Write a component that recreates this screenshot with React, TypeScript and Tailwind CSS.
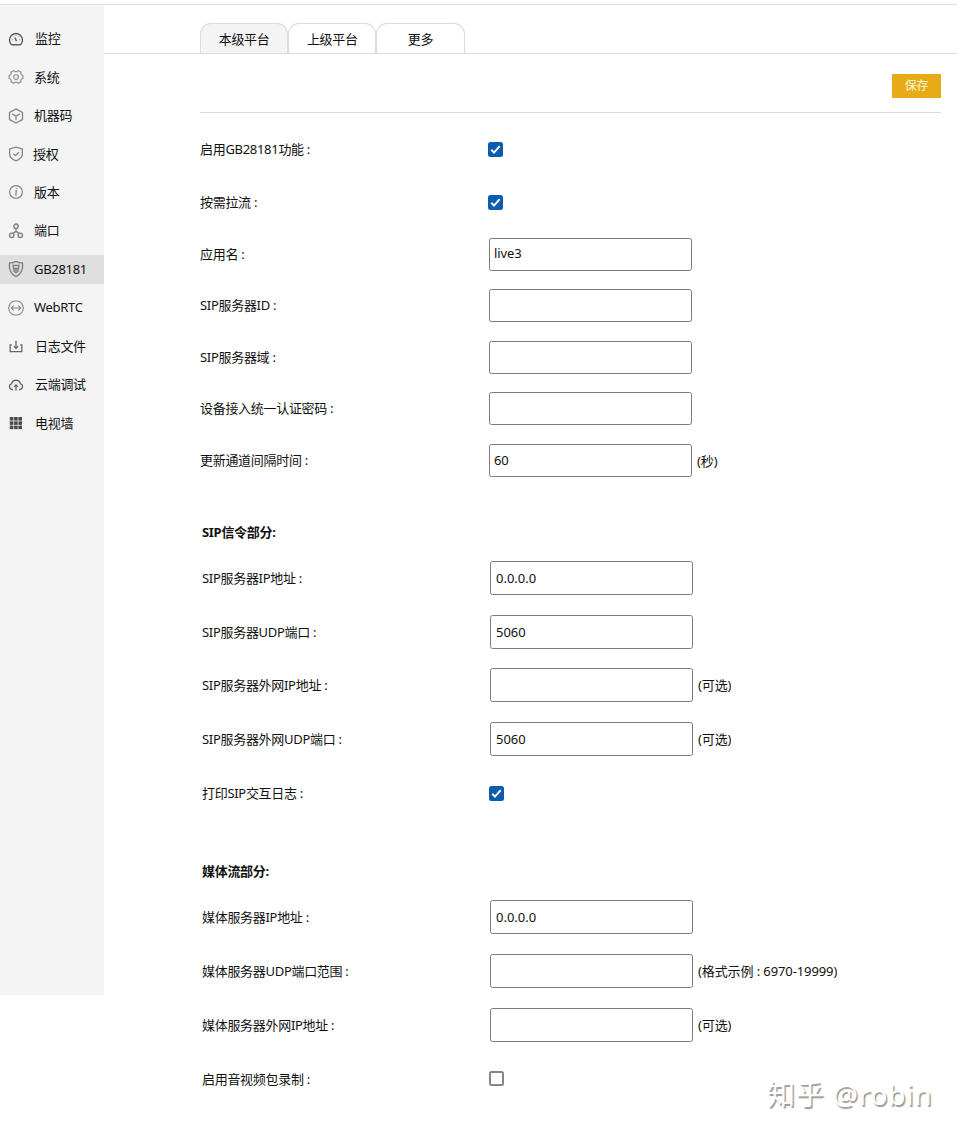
import type { ReactNode } from "react";

const icons: Record<string, ReactNode> = {
  monitor: (
    <g stroke="#5c5c5c" strokeWidth="1.4">
      <path d="M4.2 13.800h7.600a1.600 1.600 0 0 0 1.300-.7A6.500 6.500 0 1 0 2.900 13.100a1.600 1.600 0 0 0 1.300.7z" />
      <path d="M7 6.500l1.500 3.700" strokeWidth="1.500" />
      <path d="M8 3.500v1M3.800 8.800h1M11.200 8.800h1M11.200 5.300l-.6.6M4.800 5.300l.6.6" strokeWidth=".8" />
    </g>
  ),
  system: (
    <g stroke="#999" strokeWidth="1.300">
      <path d="M5.500 1.700l1.300.9h2.400l1.300-.9 2.400 1.400-.1 1.600.9 1.400 1.200.5v2.800l-1.200.5-.9 1.400.1 1.600-2.400 1.400-1.300-.9H6.800l-1.300.9-2.400-1.400.1-1.600-.9-1.400-1.200-.5V6.600l1.200-.5.9-1.400-.1-1.600z" />
      <circle cx="8" cy="8" r="2.300" />
    </g>
  ),
  cube: (
    <g stroke="#858585" strokeWidth="1.300">
      <path d="M8 .9l6.500 3.500v7.200L8 15.100l-6.500-3.500V4.400z" />
      <path d="M4.100 5.900L8 8l3.900-2.100M8 8v4.300" />
    </g>
  ),
  shield: (
    <g stroke="#858585" strokeWidth="1.300">
      <path d="M8 1.200l6.300 1.700v5.600c0 3-3 5-6.300 6.300-3.300-1.300-6.300-3.300-6.300-6.300V2.900z" />
      <path d="M5.300 7.700l2.100 2 3.500-3.500" />
    </g>
  ),
  info: (
    <g stroke="#858585" strokeWidth="1.200">
      <circle cx="8" cy="8" r="6.400" />
      <path d="M7.300 6.900h1.200l-.9 4h1.200" />
      <path d="M8.600 4.300v1" strokeWidth="1.500" />
    </g>
  ),
  port: (
    <g stroke="#808080" strokeWidth="1.400">
      <circle cx="8" cy="3.200" r="2.200" />
      <circle cx="3.700" cy="12.300" r="2.200" />
      <circle cx="12.300" cy="12.300" r="2.200" />
      <path d="M8 5.400v2.900M4.900 10.400L8 8.300l3.100 2.100" />
    </g>
  ),
  police: (
    <g stroke="#7a7a7a" strokeWidth="1.300">
      <path d="M8 .2c1.800 1.300 4 1.900 6.400 1.700.8 5.200-.2 10.300-6.400 13.900C1.800 12.200.8 7.100 1.600 1.900 4 2.100 6.200 1.500 8 .2z" />
      <path d="M5 4.400h6l-.5 3h-5zM5.900 7.600v2.600L8 11.600l2.100-1.400V7.600M7 9h2" />
    </g>
  ),
  webrtc: (
    <g stroke="#888" strokeWidth="1.100">
      <circle cx="8" cy="8" r="7.300" />
      <path d="M3.300 8h9.400M5.700 5.600L3.300 8l2.400 2.400M10.300 5.600L12.700 8l-2.400 2.400" />
    </g>
  ),
  log: (
    <g stroke="#666" strokeWidth="1.300">
      <path d="M3.700 7H2.200v6.600h11.600V7h-1.500" />
      <path d="M8 2.800v7.500M5.900 8.200L8 10.400l2.100-2.200" />
    </g>
  ),
  cloud: (
    <g stroke="#666" strokeWidth="1.300">
      <path d="M5.100 12.500H4.300a2.900 2.900 0 0 1-.7-5.700 4.500 4.500 0 0 1 8.800 0 2.900 2.900 0 0 1-.7 5.700h-.8" />
      <path d="M8 13.800V8M6 9.900l2-2 2 2" />
    </g>
  ),
  wall: (
    <g fill="#4a4a4a">
      {[2, 6.300, 10.600].map((y) =>
        [1.800, 6.100, 10.400].map((x) => <rect key={`${x}-${y}`} x={x} y={y} width="3.600" height="3.600" />),
      )}
    </g>
  ),
};

const menu = [
  { icon: "monitor", text: "监控", pad: "pl-[11px]" },
  { icon: "system", text: "系统", pad: "pl-[10px]" },
  { icon: "cube", text: "机器码", pad: "pl-[10px]" },
  { icon: "shield", text: "授权", pad: "pl-[9px]" },
  { icon: "info", text: "版本", pad: "pl-[10px]" },
  { icon: "port", text: "端口", pad: "pl-[10px]" },
  { icon: "police", text: "GB28181", pad: "pl-[10px]", active: true },
  { icon: "webrtc", text: "WebRTC", pad: "pl-[10px]" },
  { icon: "log", text: "日志文件", pad: "pl-[11px]" },
  { icon: "cloud", text: "云端调试", pad: "pl-[11px]" },
  { icon: "wall", text: "电视墙", pad: "pl-[11px]" },
];

function Check({ on }: { on?: boolean }) {
  return (
    <span
      role="checkbox"
      aria-checked={!!on}
      className={`flex size-[15px] items-center justify-center rounded-[2.5px] ${on ? "bg-[#0b5cad]" : "border-2 border-[#868686] bg-white"}`}
    >
      {on && (
        <svg viewBox="0 0 15 15" className="size-[15px]" fill="none" stroke="#fff" strokeWidth="2">
          <path d="M3.300 7.800l2.700 2.800 5.700-6.400" />
        </svg>
      )}
    </span>
  );
}

type RowProps = {
  label: string;
  h: string;
  tall?: boolean;
  value?: string;
  check?: boolean;
  note?: string;
};

function Row({ label, h, tall, value, check, note }: RowProps) {
  return (
    <div className={`flex items-center ${h}`}>
      <span className={`shrink-0 whitespace-pre ${tall ? "w-[288px]" : "w-[289px] pb-[1px]"}`}>{label}</span>
      {check !== undefined ? (
        <span className="-ml-px">
          <Check on={check} />
        </span>
      ) : (
        <input
          defaultValue={value}
          className={`w-[203px] rounded-[2.5px] border border-[#7c7c7c] bg-white outline-none ${tall ? "h-[34px] px-[5px] tracking-normal" : "h-[33px] px-[4px] pb-[2px] tracking-[-0.1px]"}`}
        />
      )}
      {note && (
        <span className="ml-[5px] max-w-[140px] overflow-hidden whitespace-nowrap tracking-[-0.1px]">{note}</span>
      )}
    </div>
  );
}

const tabs = ["本级平台", "上级平台", "更多"];

export default function App() {
  return (
    <div className="relative h-[1133px] w-[957px] overflow-hidden bg-white pt-[4px] font-['Noto_Sans','Noto_Sans_CJK_SC',sans-serif] text-[13px] leading-[20px] tracking-[-0.3px] text-[#111]">
      <div className="flex border-t border-[#dcdcdc]">
        <nav className="h-[990px] w-[104px] shrink-0 bg-[#f4f4f4] pt-[14.5px]">
          {menu.map((m) => (
            <div key={m.text} className="flex h-[38.45px] items-center">
              <div className={`flex h-[29px] w-full items-center pl-[8px] ${m.active ? "bg-[#dedede]" : ""}`}>
                <svg viewBox="0 0 16 16" className="size-[16px] shrink-0" fill="none">
                  {icons[m.icon]}
                </svg>
                <span className={`${m.pad} whitespace-nowrap pb-[1px]`}>{m.text}</span>
              </div>
            </div>
          ))}
        </nav>

        <main className="min-w-0 flex-1">
          <div className="flex h-[49px] items-end border-b border-[#dcdcdc] pl-[96px]">
            {tabs.map((t, i) => (
              <div
                key={t}
                className={`flex h-[30px] w-[88.2px] items-center justify-center rounded-t-[11px] border border-b-0 border-[#dcdcdc] ${i === 0 ? "bg-[#f4f4f4]" : "bg-white"}`}
              >
                {t}
              </div>
            ))}
          </div>

          <div className="ml-[96px] mr-[16px] flex h-[59px] items-center justify-end border-b border-[#dcdcdc] pt-[5px]">
            <button className="h-[24px] w-[49px] bg-[#e6ab17] text-[12px] leading-[24px] text-[#fff6d8]">保存</button>
          </div>

          <section className="pl-[96px] pt-[10px]">
            <Row label="启用GB28181功能 :" h="h-[53px]" check />
            <Row label="按需拉流 :" h="h-[52.4px]" check />
            <Row label="应用名 :" h="h-[51.6px]" value="live3" />
            <Row label="SIP服务器ID :" h="h-[51.6px]" />
            <Row label="SIP服务器域 :" h="h-[51.6px]" />
            <Row label="设备接入统一认证密码 :" h="h-[51.6px]" />
            <Row label="更新通道间隔时间 :" h="h-[51.6px]" value="60" note="(秒)" />
          </section>

          <section className="pl-[98px] pt-[36px]">
            <h2 className="h-[28.4px] font-bold">SIP信令部分:</h2>
            <Row tall label="SIP服务器IP地址 :" h="h-[53.9px]" value="0.0.0.0" />
            <Row tall label="SIP服务器UDP端口 :" h="h-[53.9px]" value="5060" />
            <Row tall label="SIP服务器外网IP地址 :" h="h-[53.9px]" note="(可选)" />
            <Row tall label="SIP服务器外网UDP端口 :" h="h-[53.9px]" value="5060" note="(可选)" />
            <Row tall label="打印SIP交互日志 :" h="h-[53.9px]" check />
          </section>

          <section className="pl-[98px] pt-[41px]">
            <h2 className="h-[29px] font-bold">媒体流部分:</h2>
            <Row tall label="媒体服务器IP地址 :" h="h-[53.9px]" value="0.0.0.0" />
            <Row tall label="媒体服务器UDP端口范围 :" h="h-[53.9px]" note="(格式示例 : 6970-19999)" />
            <Row tall label="媒体服务器外网IP地址 :" h="h-[53.9px]" note="(可选)" />
            <Row tall label="启用音视频包录制 :" h="h-[53.9px]" check={false} />
          </section>
        </main>
      </div>

      <div className="absolute left-[767px] top-[1076px] whitespace-nowrap text-[28px] leading-[36px] tracking-[0.8px] text-white [text-shadow:1.5px_1.5px_1px_#999]">
        知乎 @robin
      </div>
    </div>
  );
}
